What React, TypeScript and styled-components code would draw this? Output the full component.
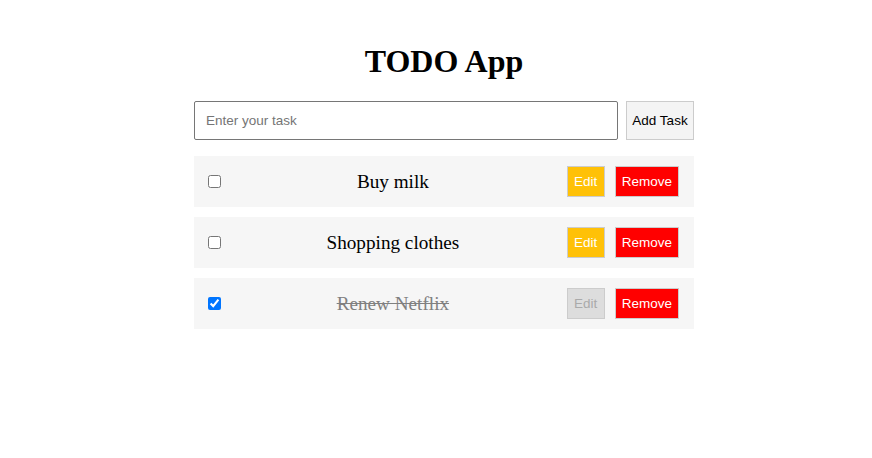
import React, { useState } from "react";
import styled, { createGlobalStyle } from "styled-components";

const GlobalStyle = createGlobalStyle`
  body {
    margin: 0;
    background: #ffffff;
    font-family: "Liberation Serif", "Times New Roman", serif;
  }
`;

const Page = styled.div`
  padding-left: 16px;
`;

const Container = styled.div`
  width: 500px;
  margin: 0 auto;
  padding-top: 21px;
`;

const Title = styled.h1`
  margin: 21.5px 0 21.5px;
  font-size: 32px;
  font-weight: bold;
  text-align: center;
  font-family: "Liberation Serif", "Times New Roman", serif;
  color: #000;
`;

const InputRow = styled.div`
  display: flex;
  gap: 8px;
  margin-bottom: 16px;
`;

const TaskInput = styled.input`
  flex: 1;
  box-sizing: border-box;
  height: 39px;
  padding: 0 11px;
  border: 1px solid #767676;
  border-radius: 2px;
  font-family: "Liberation Sans", Arial, sans-serif;
  font-size: 13.5px;
  color: #000;
  outline: none;
  &::placeholder {
    color: #757575;
  }
`;

const AddButton = styled.button`
  box-sizing: border-box;
  height: 39px;
  width: 68px;
  padding: 0 5px;
  border: 1px solid #cccccc;
  background: #f4f4f4;
  color: #000;
  font-family: "Liberation Sans", Arial, sans-serif;
  font-size: 13.5px;
  cursor: pointer;
`;

const List = styled.ul`
  list-style: none;
  margin: 0;
  padding: 0;
  display: flex;
  flex-direction: column;
  gap: 10px;
`;

const Item = styled.li`
  display: flex;
  align-items: center;
  padding: 10px;
  background: #f6f6f6;
`;

const Check = styled.input`
  width: 13px;
  height: 13px;
  margin: 3px 3px 3px 4px;
`;

const Label = styled.span<{ $done: boolean }>`
  flex: 1;
  text-align: center;
  font-family: "Liberation Serif", "Times New Roman", serif;
  font-size: 19.2px;
  color: ${(p) => (p.$done ? "#808080" : "#000")};
  text-decoration: ${(p) => (p.$done ? "line-through" : "none")};
`;

const ActionButton = styled.button<{ $kind: "edit" | "remove" }>`
  box-sizing: border-box;
  height: 31px;
  margin: 0 5px;
  padding: 0 6px;
  min-width: ${(p) => (p.$kind === "edit" ? "38px" : "64px")};
  border: 1px solid #cccccc;
  font-family: "Liberation Sans", Arial, sans-serif;
  font-size: 13.5px;
  color: #ffffff;
  background: ${(p) => (p.$kind === "edit" ? "#ffc107" : "#ff0000")};
  cursor: pointer;
  &:disabled {
    background: #dddddd;
    color: #aaaaaa;
    cursor: default;
  }
`;

type Task = { id: number; text: string; done: boolean };

export default function App() {
  const [tasks, setTasks] = useState<Task[]>([
    { id: 1, text: "Buy milk", done: false },
    { id: 2, text: "Shopping clothes", done: false },
    { id: 3, text: "Renew Netflix", done: true },
  ]);
  const [value, setValue] = useState("");

  const toggle = (id: number) =>
    setTasks((ts) => ts.map((t) => (t.id === id ? { ...t, done: !t.done } : t)));
  const remove = (id: number) => setTasks((ts) => ts.filter((t) => t.id !== id));
  const add = () => {
    if (!value.trim()) return;
    setTasks((ts) => [...ts, { id: Date.now(), text: value.trim(), done: false }]);
    setValue("");
  };

  return (
    <Page>
      <GlobalStyle />
      <Container>
        <Title>TODO App</Title>
        <InputRow>
          <TaskInput
            placeholder="Enter your task"
            value={value}
            onChange={(e) => setValue(e.target.value)}
          />
          <AddButton onClick={add}>Add Task</AddButton>
        </InputRow>
        <List>
          {tasks.map((t) => (
            <Item key={t.id}>
              <Check type="checkbox" checked={t.done} onChange={() => toggle(t.id)} />
              <Label $done={t.done}>{t.text}</Label>
              <ActionButton $kind="edit" disabled={t.done}>
                Edit
              </ActionButton>
              <ActionButton $kind="remove" onClick={() => remove(t.id)}>
                Remove
              </ActionButton>
            </Item>
          ))}
        </List>
      </Container>
    </Page>
  );
}
